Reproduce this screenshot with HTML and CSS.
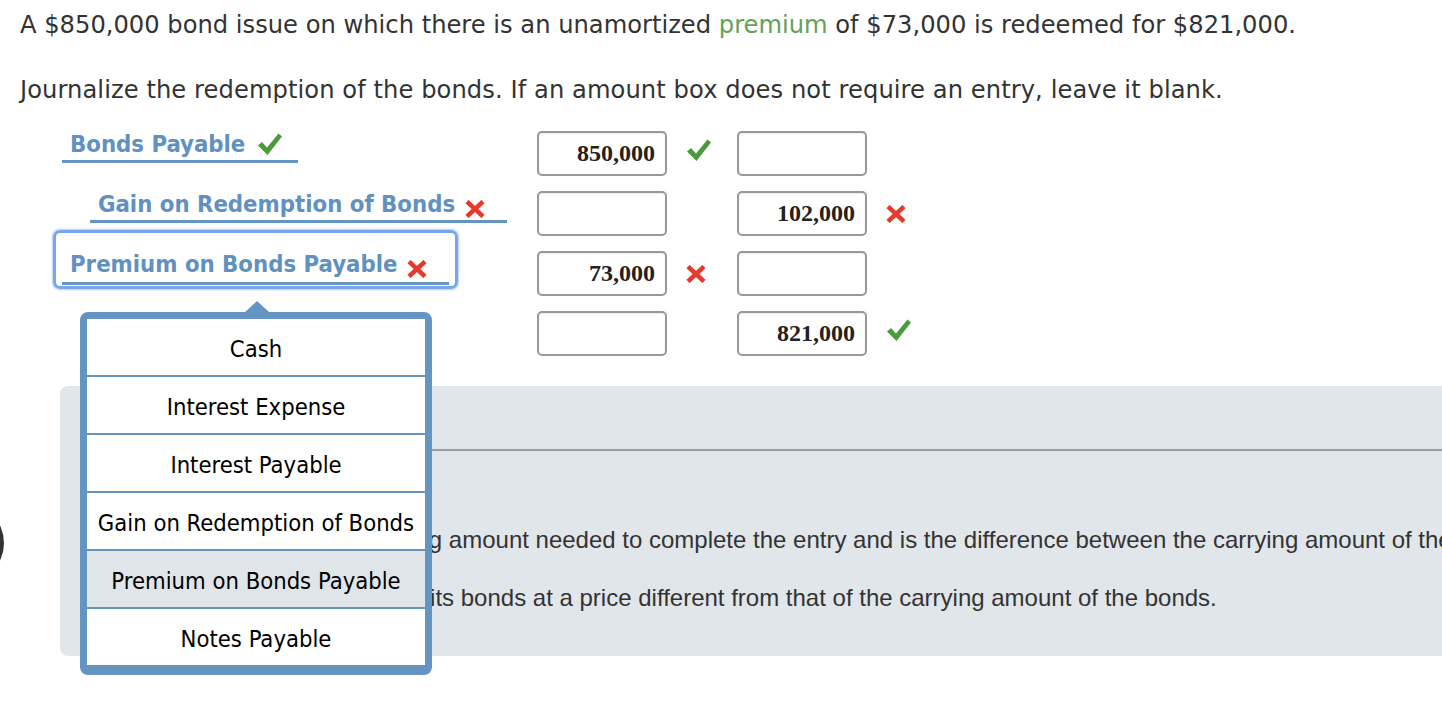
FILE: index.html
```html
<!DOCTYPE html>
<html lang="en">
<head>
<meta charset="utf-8">
<title>Bond redemption</title>
<link rel="stylesheet" href="styles.css">
</head>
<body>
<div class="page">
  <p class="q q1">A $850,000 bond issue on which there is an unamortized <span class="term">premium</span> of $73,000 is redeemed for $821,000.</p>
  <p class="q q2">Journalize the redemption of the bonds. If an amount box does not require an entry, leave it blank.</p>

  <div class="journal">
    <div class="row">
      <div class="acct"><span class="sel">Bonds Payable<svg class="ok" width="25" height="23" viewBox="0 0 25 23"><path d="M1 12.5 L5 9 L10 14.5 L21.5 0.5 L25 3.5 L10.5 22 Z"/></svg></span></div>
      <div class="amt">850,000</div>
      <div class="mark"><svg class="ok" width="25" height="23" viewBox="0 0 25 23"><path d="M1 12.5 L5 9 L10 14.5 L21.5 0.5 L25 3.5 L10.5 22 Z"/></svg></div>
      <div class="amt"></div>
      <div class="mark"></div>
    </div>
    <div class="row">
      <div class="acct cr"><span class="sel bad">Gain on Redemption of Bonds<svg class="no" width="20" height="18" viewBox="0 0 20 18"><path d="M2 1.5 L18 16.5 M18 1.5 L2 16.5"/></svg></span></div>
      <div class="amt"></div>
      <div class="mark"></div>
      <div class="amt">102,000</div>
      <div class="mark"><svg class="no" width="20" height="18" viewBox="0 0 20 18"><path d="M2 1.5 L18 16.5 M18 1.5 L2 16.5"/></svg></div>
    </div>
    <div class="row">
      <div class="acct"><span class="sel bad focus">Premium on Bonds Payable<svg class="no" width="20" height="18" viewBox="0 0 20 18"><path d="M2 1.5 L18 16.5 M18 1.5 L2 16.5"/></svg>
        <span class="menu">
          <span class="item">Cash</span>
          <span class="item">Interest Expense</span>
          <span class="item">Interest Payable</span>
          <span class="item">Gain on Redemption of Bonds</span>
          <span class="item hl">Premium on Bonds Payable</span>
          <span class="item">Notes Payable</span>
        </span>
      </span></div>
      <div class="amt">73,000</div>
      <div class="mark"><svg class="no" width="20" height="18" viewBox="0 0 20 18"><path d="M2 1.5 L18 16.5 M18 1.5 L2 16.5"/></svg></div>
      <div class="amt"></div>
      <div class="mark"></div>
    </div>
    <div class="row">
      <div class="acct cr"><span class="sel">Cash</span></div>
      <div class="amt"></div>
      <div class="mark"></div>
      <div class="amt">821,000</div>
      <div class="mark"><svg class="ok" width="25" height="23" viewBox="0 0 25 23"><path d="M1 12.5 L5 9 L10 14.5 L21.5 0.5 L25 3.5 L10.5 22 Z"/></svg></div>
    </div>
  </div>

  <section class="feedback">
    <div class="fb-head">Feedback</div>
    <p class="fb-text">The gain (loss) is the balancing amount needed to complete the entry and is the difference between the carrying amount of the bonds and the price paid.</p>
    <p class="fb-text">Gain results if a firm redeems its bonds at a price different from that of the carrying amount of the bonds.</p>
  </section>
</div>
<div class="edge-dot"></div>
</body>
</html>
```
FILE: styles.css
```css
html, body {
  margin: 0;
  overflow: hidden;
  background: #fff;
}
body {
  position: relative;
  height: 712px;
  font-family: "DejaVu Sans Condensed", "DejaVu Sans", sans-serif;
  color: #333;
}
.page {
  padding: 0 20px;
}
.q {
  margin: 0;
  font-family: "DejaVu Sans", "Liberation Sans", sans-serif;
  font-size: 24.2px;
  line-height: 30px;
  white-space: nowrap;
}
.q1 { padding-top: 10px; }
.q2 { margin-top: 35px; letter-spacing: 0.07px; }
.term { color: #64a05a; }

.journal { margin-top: 25px; }
.row {
  display: grid;
  grid-template-columns: 517px 130px 70px 130px 70px;
  height: 60px;
  align-items: start;
}
.acct { padding-left: 42px; }
.acct.cr { padding-left: 70px; }
.sel {
  position: relative;
  display: inline-flex;
  align-items: center;
  height: 33px;
  box-sizing: border-box;
  padding: 0 16px 2px 8px;
  border-bottom: 3px solid #6494c2;
  font-weight: bold;
  font-size: 23.7px;
  color: #6191c0;
  white-space: nowrap;
}
.sel.bad { padding-right: 22px; }
.sel > svg { margin-left: 12px; flex: none; }
.sel > svg.no { margin-top: 10px; margin-left: 10px; }
.sel.focus {
  height: 35px;
  padding-bottom: 4px;
}
.sel.focus::before {
  content: "";
  position: absolute;
  left: -9px;
  right: -9px;
  top: -20px;
  bottom: -7px;
  border: 3px solid #79a4ee;
  border-radius: 7px;
  box-shadow: 0 0 2px 1px #b8d0f7;
}
.ok path { fill: #4b9b3d; }
.no path { stroke: #e63a2c; stroke-width: 4.5; fill: none; }

.amt {
  margin-top: 1px;
  height: 45px;
  box-sizing: border-box;
  border: 2px solid #999;
  border-radius: 5px;
  background: #fff;
  font: bold 24px/41px "Liberation Serif", serif;
  color: #222;
  text-align: right;
  padding-right: 10px;
  box-shadow: inset 0 1px 2px rgba(0, 0, 0, 0.08);
}
.mark {
  height: 47px;
  display: flex;
  align-items: center;
  padding-left: 19px;
}
.mark .ok { margin-top: -6px; }

.menu {
  position: absolute;
  left: 18px;
  top: 62px;
  z-index: 10;
  width: 352px;
  box-sizing: border-box;
  display: flex;
  flex-direction: column;
  gap: 2px;
  border: 7px solid #6494c2;
  border-radius: 8px;
  padding-bottom: 3px;
  background: #6494c2;
  font-weight: normal;
  font-size: 23.6px;
  color: #000;
}
.menu::before {
  content: "";
  position: absolute;
  top: -18px;
  left: 158px;
  width: 0;
  height: 0;
  border-left: 12px solid transparent;
  border-right: 12px solid transparent;
  border-bottom: 11px solid #6494c2;
}
.item {
  height: 56px;
  box-sizing: border-box;
  padding-top: 4px;
  display: flex;
  align-items: center;
  justify-content: center;
  background: #fff;
}
.item.hl { background: #dfe5e8; }

.feedback {
  margin: 16px -60px 0 40px;
  background: #e1e6ea;
  border-radius: 8px;
  padding: 0 0 44px 20px;
  font-family: "Liberation Sans", Arial, sans-serif;
  color: #333;
  white-space: nowrap;
}
.fb-head {
  height: 65px;
  box-sizing: border-box;
  padding: 18px 0 0 20px;
  border-bottom: 2px solid #9a9ea2;
  font-size: 24px;
  font-weight: bold;
}
.fb-text {
  margin: 75px 0 0;
  padding-left: 30px;
  font-size: 24px;
  line-height: 28px;
}
.fb-text + .fb-text { margin-top: 30px; }

.edge-dot {
  position: absolute;
  left: -76px;
  top: 503px;
  width: 80px;
  height: 80px;
  border-radius: 50%;
  background: #333;
}
```
